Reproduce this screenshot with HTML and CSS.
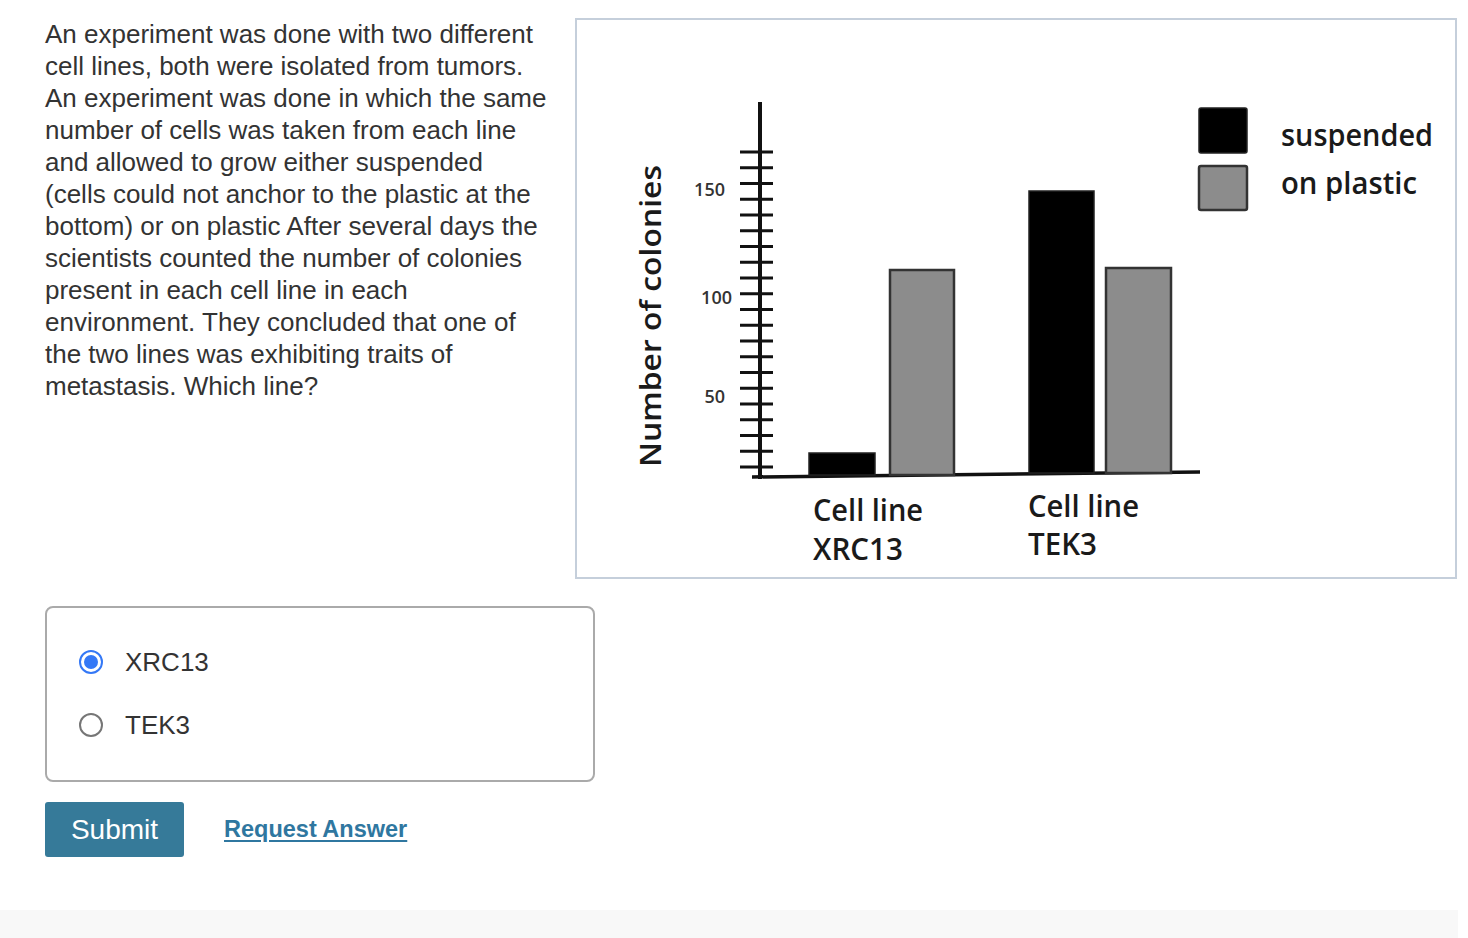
FILE: index.html
```html
<!DOCTYPE html>
<html lang="en">
<head>
<meta charset="utf-8">
<title>Question</title>
<link rel="stylesheet" href="styles.css">
</head>
<body>
<main class="page">
  <div class="question-row">
    <p class="question">An experiment was done with two different cell lines, both were isolated from tumors. An experiment was done in which the same number of cells was taken from each line and allowed to grow either suspended (cells could not anchor to the plastic at the bottom) or on plastic After several days the scientists counted the number of colonies present in each cell line in each environment. They concluded that one of the two lines was exhibiting traits of metastasis. Which line?</p>
    <figure class="chart-box">
      <svg class="chart" width="878" height="557" viewBox="0 0 878 557">
        <g class="ticks" stroke="#111" stroke-width="3">
          <line x1="163" x2="196" y1="132" y2="132"/>
          <line x1="163" x2="196" y1="147.75" y2="147.75"/>
          <line x1="163" x2="196" y1="163.5" y2="163.5"/>
          <line x1="163" x2="196" y1="179.25" y2="179.25"/>
          <line x1="163" x2="196" y1="195" y2="195"/>
          <line x1="163" x2="196" y1="210.75" y2="210.75"/>
          <line x1="163" x2="196" y1="226.5" y2="226.5"/>
          <line x1="163" x2="196" y1="242.25" y2="242.25"/>
          <line x1="163" x2="196" y1="258" y2="258"/>
          <line x1="163" x2="196" y1="273.75" y2="273.75"/>
          <line x1="163" x2="196" y1="289.5" y2="289.5"/>
          <line x1="163" x2="196" y1="305.25" y2="305.25"/>
          <line x1="163" x2="196" y1="321" y2="321"/>
          <line x1="163" x2="196" y1="336.75" y2="336.75"/>
          <line x1="163" x2="196" y1="352.5" y2="352.5"/>
          <line x1="163" x2="196" y1="368.25" y2="368.25"/>
          <line x1="163" x2="196" y1="384" y2="384"/>
          <line x1="163" x2="196" y1="399.75" y2="399.75"/>
          <line x1="163" x2="196" y1="415.5" y2="415.5"/>
          <line x1="163" x2="196" y1="431.25" y2="431.25"/>
          <line x1="163" x2="196" y1="447" y2="447"/>
        </g>
        <line x1="183" y1="82" x2="183" y2="459" stroke="#111" stroke-width="4"/>
        <line x1="175" y1="457" x2="623" y2="452" stroke="#111" stroke-width="3.5"/>
        <text class="tick-label" x="148" y="176">150</text>
        <text class="tick-label" x="155" y="284">100</text>
        <text class="tick-label" x="148" y="383">50</text>
        <text class="axis-title" transform="translate(84 296) rotate(-90)" x="0" y="0" text-anchor="middle" textLength="302" lengthAdjust="spacingAndGlyphs">Number of colonies</text>
        <rect x="232" y="433" width="66" height="22" fill="#000" stroke="#222" stroke-width="1.5"/>
        <rect x="313" y="250" width="64" height="205" fill="#8c8c8c" stroke="#333" stroke-width="2.5"/>
        <rect x="452" y="171" width="65" height="282" fill="#000" stroke="#222" stroke-width="1.5"/>
        <rect x="529" y="248" width="65" height="205" fill="#8c8c8c" stroke="#333" stroke-width="2.5"/>
        <rect x="622" y="88" width="48" height="45" rx="2" fill="#000" stroke="#222" stroke-width="1.5"/>
        <rect x="622" y="146" width="48" height="44" rx="2" fill="#8c8c8c" stroke="#333" stroke-width="2.5"/>
        <text class="chart-text" x="704" y="126" textLength="152" lengthAdjust="spacingAndGlyphs">suspended</text>
        <text class="chart-text" x="704" y="174" textLength="136" lengthAdjust="spacingAndGlyphs">on plastic</text>
        <text class="chart-text" x="236" y="501" textLength="110" lengthAdjust="spacingAndGlyphs">Cell line</text>
        <text class="chart-text" x="236" y="540" textLength="90" lengthAdjust="spacingAndGlyphs">XRC13</text>
        <text class="chart-text" x="451" y="497" textLength="111" lengthAdjust="spacingAndGlyphs">Cell line</text>
        <text class="chart-text" x="451" y="535" textLength="69" lengthAdjust="spacingAndGlyphs">TEK3</text>
      </svg>
    </figure>
  </div>

  <div class="options">
    <label class="option">
      <span class="radio radio-checked"></span>
      <span class="option-label">XRC13</span>
    </label>
    <label class="option">
      <span class="radio"></span>
      <span class="option-label">TEK3</span>
    </label>
  </div>

  <div class="actions">
    <button class="submit" type="button">Submit</button>
    <a class="request" href="#">Request Answer</a>
  </div>
</main>
<footer class="footer-band"></footer>
</body>
</html>
```

FILE: styles.css
```css
html, body {
  margin: 0;
  padding: 0;
  background: #ffffff;
}

body {
  font-family: "Liberation Sans", Arial, Helvetica, sans-serif;
  color: #333333;
  width: 1468px;
  height: 938px;
  overflow: hidden;
}

.page {
  padding: 18px 0 0 45px;
  height: 892px;
  box-sizing: border-box;
}

.question-row {
  display: flex;
  align-items: flex-start;
  gap: 27px;
}

.question {
  margin: 0;
  width: 503px;
  font-size: 26px;
  line-height: 32px;
  color: #333333;
}

.chart-box {
  margin: 0;
  width: 878px;
  height: 557px;
  border: 2px solid #c5cfdb;
  background: #ffffff;
}

.chart {
  display: block;
}

.tick-label {
  font-family: "Open Sans", "DejaVu Sans", sans-serif;
  font-size: 18px;
  font-weight: 600;
  fill: #333333;
  text-anchor: end;
}

.axis-title {
  font-family: "Open Sans", "DejaVu Sans", sans-serif;
  font-size: 29px;
  font-weight: 600;
  fill: #1a1a1a;
}

.chart-text {
  font-family: "Open Sans", "DejaVu Sans", sans-serif;
  font-size: 30px;
  font-weight: 600;
  fill: #1a1a1a;
}

.options {
  margin-top: 27px;
  width: 550px;
  height: 176px;
  box-sizing: border-box;
  border: 2px solid #aaaaaa;
  border-radius: 8px;
  padding: 30px 32px;
  display: flex;
  flex-direction: column;
  gap: 15px;
}

.option {
  display: flex;
  align-items: center;
  height: 48px;
  gap: 22px;
  cursor: pointer;
}

.radio {
  width: 24px;
  height: 24px;
  box-sizing: border-box;
  border: 2px solid #767676;
  border-radius: 50%;
  background: #ffffff;
  position: relative;
  flex: none;
}

.radio-checked {
  border-color: #3478f6;
}

.radio-checked::after {
  content: "";
  position: absolute;
  left: 3px;
  top: 3px;
  width: 14px;
  height: 14px;
  border-radius: 50%;
  background: #3478f6;
}

.option-label {
  font-size: 26px;
  color: #333333;
}

.actions {
  margin-top: 20px;
  display: flex;
  align-items: center;
  gap: 40px;
}

.submit {
  width: 139px;
  height: 55px;
  border: none;
  border-radius: 3px;
  background: #367a99;
  color: #ffffff;
  font-family: "Liberation Sans", Arial, Helvetica, sans-serif;
  font-size: 28px;
  padding: 0;
  cursor: pointer;
}

.request {
  font-size: 23.5px;
  font-weight: 700;
  color: #2f77a0;
  text-decoration: underline;
  text-underline-offset: 3px;
}

.footer-band {
  height: 28px;
  width: 1458px;
  margin-top: 18px;
  background: #f8f8f8;
}
```
